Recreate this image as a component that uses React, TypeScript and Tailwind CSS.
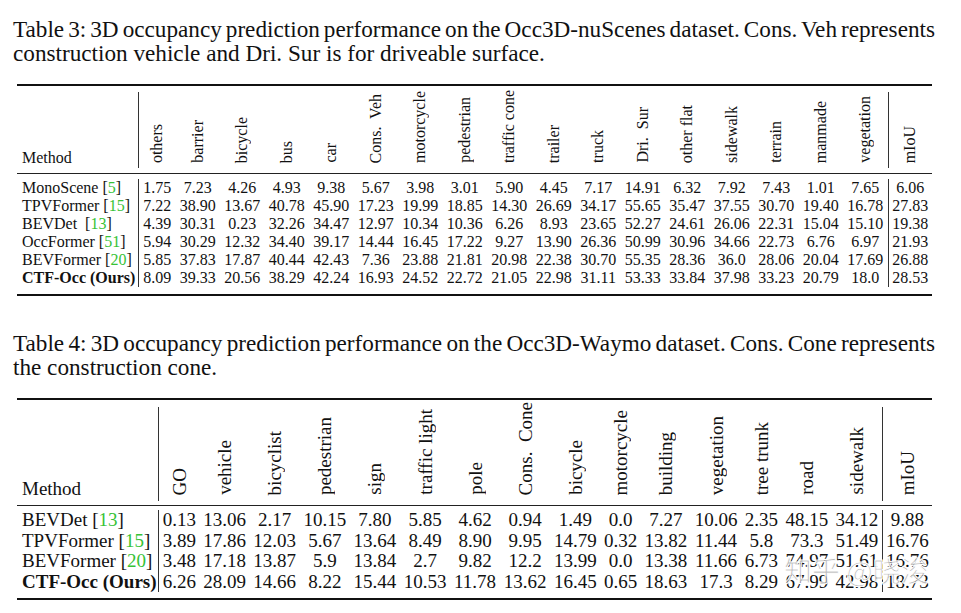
import React from 'react'

type Row = {
	name: string
	cite?: string
	bold?: boolean
	wide?: boolean
	vals: string[]
	miou: string
}

type Spec = {
	text: string
	leading: string
	methodW: string
	widths: string[]
	miouW: string
	labels: string[]
	rows: Row[]
	headMt: string
	headH: string
	labelPb: string
	methodPb: string
	midMt: string
	bodyMt: string
	bottomMt: string
}

const S3 = 'w-[36.5px]'
const L3 = 'w-[44.5px]'
const S4 = 'w-[40.6px]'
const L4 = 'w-[50.1px]'

const table3: Spec = {
	text: 'text-[16px]',
	leading: 'leading-[18px]',
	methodW: 'w-[122px]',
	widths: [S3, L3, L3, L3, L3, L3, L3, L3, L3, L3, L3, L3, L3, L3, L3, L3, L3],
	miouW: 'w-[44.5px]',
	labels: [
		'others', 'barrier', 'bicycle', 'bus', 'car', 'Cons.\u00a0 Veh', 'motorcycle', 'pedestrian',
		'traffic cone', 'trailer', 'truck', 'Dri.\u00a0 Sur', 'other flat', 'sidewalk', 'terrain',
		'manmade', 'vegetation',
	],
	rows: [
		{ name: 'MonoScene', cite: '5', vals: ['1.75', '7.23', '4.26', '4.93', '9.38', '5.67', '3.98', '3.01', '5.90', '4.45', '7.17', '14.91', '6.32', '7.92', '7.43', '1.01', '7.65'], miou: '6.06' },
		{ name: 'TPVFormer', cite: '15', vals: ['7.22', '38.90', '13.67', '40.78', '45.90', '17.23', '19.99', '18.85', '14.30', '26.69', '34.17', '55.65', '35.47', '37.55', '30.70', '19.40', '16.78'], miou: '27.83' },
		{ name: 'BEVDet', cite: '13', wide: true, vals: ['4.39', '30.31', '0.23', '32.26', '34.47', '12.97', '10.34', '10.36', '6.26', '8.93', '23.65', '52.27', '24.61', '26.06', '22.31', '15.04', '15.10'], miou: '19.38' },
		{ name: 'OccFormer', cite: '51', vals: ['5.94', '30.29', '12.32', '34.40', '39.17', '14.44', '16.45', '17.22', '9.27', '13.90', '26.36', '50.99', '30.96', '34.66', '22.73', '6.76', '6.97'], miou: '21.93' },
		{ name: 'BEVFormer', cite: '20', vals: ['5.85', '37.83', '17.87', '40.44', '42.43', '7.36', '23.88', '21.81', '20.98', '22.38', '30.70', '55.35', '28.36', '36.0', '28.06', '20.04', '17.69'], miou: '26.88' },
		{ name: 'CTF-Occ (Ours)', bold: true, vals: ['8.09', '39.33', '20.56', '38.29', '42.24', '16.93', '24.52', '22.72', '21.05', '22.98', '31.11', '53.33', '33.84', '37.98', '33.23', '20.79', '18.0'], miou: '28.53' },
	],
	headMt: 'mt-[6px]',
	headH: 'h-[76px]',
	labelPb: 'pb-[5px]',
	methodPb: 'pb-[1px]',
	midMt: 'mt-[5px]',
	bodyMt: 'mt-[5px]',
	bottomMt: 'mt-[5px]',
}

const table4: Spec = {
	text: 'text-[19px]',
	leading: 'leading-[20.5px]',
	methodW: 'w-[142px]',
	widths: [S4, L4, L4, L4, L4, L4, L4, L4, L4, S4, L4, L4, S4, L4, L4],
	miouW: 'w-[50px]',
	labels: [
		'GO', 'vehicle', 'bicyclist', 'pedestrian', 'sign', 'traffic light', 'pole', 'Cons.\u00a0 Cone',
		'bicycle', 'motorcycle', 'building', 'vegetation', 'tree trunk', 'road', 'sidewalk',
	],
	rows: [
		{ name: 'BEVDet', cite: '13', vals: ['0.13', '13.06', '2.17', '10.15', '7.80', '5.85', '4.62', '0.94', '1.49', '0.0', '7.27', '10.06', '2.35', '48.15', '34.12'], miou: '9.88' },
		{ name: 'TPVFormer', cite: '15', vals: ['3.89', '17.86', '12.03', '5.67', '13.64', '8.49', '8.90', '9.95', '14.79', '0.32', '13.82', '11.44', '5.8', '73.3', '51.49'], miou: '16.76' },
		{ name: 'BEVFormer', cite: '20', vals: ['3.48', '17.18', '13.87', '5.9', '13.84', '2.7', '9.82', '12.2', '13.99', '0.0', '13.38', '11.66', '6.73', '74.97', '51.61'], miou: '16.76' },
		{ name: 'CTF-Occ (Ours)', bold: true, vals: ['6.26', '28.09', '14.66', '8.22', '15.44', '10.53', '11.78', '13.62', '16.45', '0.65', '18.63', '17.3', '8.29', '67.99', '42.98'], miou: '18.73' },
	],
	headMt: 'mt-[7px]',
	headH: 'h-[94px]',
	labelPb: 'pb-[6px]',
	methodPb: 'pb-[2px]',
	midMt: 'mt-[4px]',
	bodyMt: 'mt-[4px]',
	bottomMt: 'mt-[4px]',
}

function Caption({ first, second }: { first: string; second: string }) {
	return (
		<div className="w-[935px] pl-[13px] text-[23.2px] leading-[24px] text-[#111]">
			<div className="text-justify [text-align-last:justify] [word-spacing:-2.5px] whitespace-nowrap">{first}</div>
			<div>{second}</div>
		</div>
	)
}

function MethodName({ row }: { row: Row }) {
	return (
		<span className={row.bold ? 'font-bold' : ''}>
			{row.name}
			{row.cite && (
				<>
					{row.wide ? '\u00a0 [' : ' ['}
					<span className="text-[#36c236]">{row.cite}</span>]
				</>
			)}
		</span>
	)
}

function Table({ t }: { t: Spec }) {
	return (
		<div className={`ml-[17px] w-[915px] text-[#111] ${t.text}`}>
			<div className="h-[2px] bg-[#111]" />
			<div className={`flex ${t.headMt} ${t.headH}`}>
				<div className={`${t.methodW} flex items-end border-r border-[#333] pl-[5px] ${t.methodPb}`}>
					<span className={t.leading}>Method</span>
				</div>
				{t.labels.map((label, i) => (
					<div key={label} className={`${t.widths[i]} flex items-end justify-center ${t.labelPb}`}>
						<span className="[writing-mode:vertical-rl] rotate-180 whitespace-nowrap leading-none">{label}</span>
					</div>
				))}
				<div className={`${t.miouW} flex items-end justify-center border-l border-[#333] ${t.labelPb}`}>
					<span className="[writing-mode:vertical-rl] rotate-180 whitespace-nowrap leading-none">mIoU</span>
				</div>
			</div>
			<div className={`h-px bg-[#222] ${t.midMt}`} />
			<div className={`flex flex-col pb-[1px] ${t.bodyMt}`}>
				{t.rows.map((row, r) => (
					<div key={row.name} className={`flex ${t.leading} ${r === t.rows.length - 1 ? 'pb-[1px]' : ''}`}>
						<div className={`${t.methodW} whitespace-nowrap border-r border-[#333] pl-[5px]`}>
							<MethodName row={row} />
						</div>
						{row.vals.map((v, i) => (
							<div key={i} className={`${t.widths[i]} text-center whitespace-nowrap`}>
								{v}
							</div>
						))}
						<div className={`${t.miouW} border-l border-[#333] text-center`}>{row.miou}</div>
					</div>
				))}
			</div>
			<div className={`h-[2px] bg-[#111] ${t.bottomMt}`} />
		</div>
	)
}

export default function App() {
	return (
		<div className="relative h-[613px] w-[961px] overflow-hidden bg-white pt-[17px] font-['Liberation_Serif','Times_New_Roman',serif]">
			<Caption
				first="Table 3: 3D occupancy prediction performance on the Occ3D-nuScenes dataset. Cons. Veh represents"
				second="construction vehicle and Dri. Sur is for driveable surface."
			/>
			<div className="mt-[19px]">
				<Table t={table3} />
			</div>
			<div className="mt-[35px]">
				<Caption
					first="Table 4: 3D occupancy prediction performance on the Occ3D-Waymo dataset. Cons. Cone represents"
					second="the construction cone."
				/>
			</div>
			<div className="mt-[19px]">
				<Table t={table4} />
			</div>
			<div className="pointer-events-none absolute left-[784px] top-[556px] whitespace-nowrap font-['Noto_Sans_CJK_SC',sans-serif] text-[28px] leading-none text-[#9a9a9a]/70 [-webkit-text-stroke:1px_#ffffff]">
				知乎 @晓浚
			</div>
		</div>
	)
}
